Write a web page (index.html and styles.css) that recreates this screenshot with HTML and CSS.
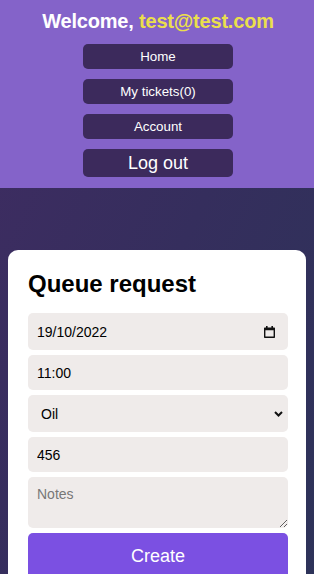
FILE: index.html
```html
<!DOCTYPE html>
<html lang="en">
<head>
<meta charset="utf-8">
<title>Queue request</title>
<link rel="stylesheet" href="styles.css">
</head>
<body>
<header class="topbar">
  <h1 class="welcome">Welcome, <span class="email">test@test.com</span></h1>
  <nav class="nav">
    <a class="nav-btn" href="#">Home</a>
    <a class="nav-btn" href="#">My tickets(0)</a>
    <a class="nav-btn" href="#">Account</a>
    <button class="nav-btn logout" type="button">Log out</button>
  </nav>
</header>
<main class="content">
  <form class="card">
    <h2 class="card-title">Queue request</h2>
    <div class="fields">
      <label class="field field-date">
        <input class="field-input" type="text" value="19/10/2022">
        <svg class="cal-icon" width="11" height="12" viewBox="0 0 11 12" aria-hidden="true"><path fill="#111" fill-rule="evenodd" d="M2 0h1.6v1.4h3.8V0H9v1.4h1.3c.4 0 .7.3.7.7v9.2c0 .4-.3.7-.7.7H.7c-.4 0-.7-.3-.7-.7V2.1c0-.4.3-.7.7-.7H2zM1.4 4.2v6.4h8.2V4.2z"/></svg>
      </label>
      <input class="field field-time" type="text" value="11:00">
      <label class="field field-select">
        <select class="select">
          <option>Oil</option>
          <option>Tyres</option>
          <option>Brakes</option>
        </select>
        <svg class="chevron" width="9" height="6" viewBox="0 0 9 6" aria-hidden="true"><path d="M1 1l3.5 3.5L8 1" fill="none" stroke="#111" stroke-width="2"/></svg>
      </label>
      <input class="field field-number" type="text" value="456">
      <textarea class="field field-notes" placeholder="Notes"></textarea>
      <button class="create" type="button">Create</button>
    </div>
  </form>
</main>
</body>
</html>
```
FILE: styles.css
```css
* { box-sizing: border-box; }

html, body { margin: 0; padding: 0; }

body {
  min-height: 100vh;
  font-family: "Liberation Sans", Arial, sans-serif;
  background: linear-gradient(115deg, #3f2c62 0%, #352e5d 50%, #2d3359 100%);
  overflow: hidden;
}

.topbar {
  background: #8463c9;
  padding: 10px 0 11px 2px;
  display: flex;
  flex-direction: column;
  align-items: center;
}

.welcome {
  margin: 0 0 1px;
  font-size: 20px;
  font-weight: bold;
  line-height: 23px;
  color: #ffffff;
  letter-spacing: -0.2px;
}

.email { color: #eadf4c; }

.nav {
  display: flex;
  flex-direction: column;
  align-items: center;
  gap: 10px;
  margin-top: 10px;
}

.nav-btn {
  display: flex;
  align-items: center;
  justify-content: center;
  width: 150px;
  height: 25px;
  background: #3c2a5c;
  color: #ffffff;
  border: none;
  border-radius: 5px;
  font-family: "Liberation Sans", Arial, sans-serif;
  font-size: 13.333px;
  text-decoration: none;
  padding: 0;
}

.logout {
  height: 28px;
  font-size: 18px;
}

.content {
  padding: 62px 8px 0;
}

.card {
  background: #ffffff;
  border-radius: 10px;
  padding: 20px 18px 20px 20px;
}

.card-title {
  margin: 0 0 16px;
  font-size: 24px;
  font-weight: bold;
  line-height: 27px;
  color: #000000;
}

.fields {
  display: flex;
  flex-direction: column;
  gap: 5px;
}

.field {
  display: flex;
  align-items: center;
  width: 100%;
  background: #efebea;
  border: none;
  border-radius: 5px;
  padding: 0 9px;
  font-family: "Liberation Sans", Arial, sans-serif;
  font-size: 14px;
  color: #000000;
  outline: none;
}

.field-date {
  height: 37px;
  padding-right: 13px;
}

.field-input {
  flex: 1;
  min-width: 0;
  border: none;
  background: transparent;
  font-family: inherit;
  font-size: 14px;
  color: #000000;
  padding: 0;
  outline: none;
}

.cal-icon { flex: none; }

.field-time { height: 35px; }

.field-select {
  height: 37px;
  padding: 0 5px 0 13px;
}

.select {
  flex: 1;
  appearance: none;
  -webkit-appearance: none;
  border: none;
  background: transparent;
  font-family: inherit;
  font-size: 14px;
  color: #000000;
  padding: 0;
  outline: none;
}

.chevron { flex: none; }

.field-number { height: 35px; }

.field-notes {
  display: block;
  height: 51px;
  padding: 9px 9px;
  resize: vertical;
}

.field-notes::placeholder { color: #777777; }

.create {
  height: 46px;
  width: 100%;
  border: none;
  border-radius: 5px;
  background: #7b50e2;
  color: #ffffff;
  font-family: "Liberation Sans", Arial, sans-serif;
  font-size: 18px;
  padding: 0;
}
```
